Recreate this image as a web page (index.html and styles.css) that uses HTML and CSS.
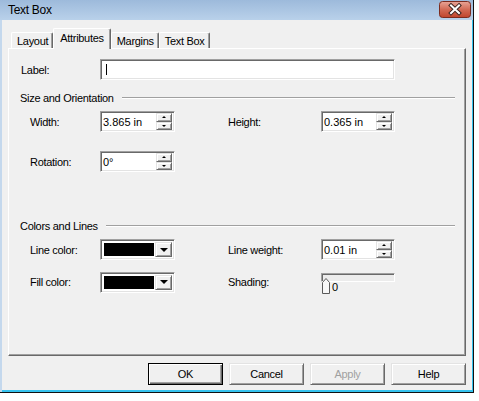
FILE: index.html
```html
<!DOCTYPE html>
<html lang="en">
  <head>
    <meta charset="UTF-8" />
    <title>Text Box</title>
    <link rel="stylesheet" href="styles.css">
  </head>
  <body>
    <div class="window">
      <div class="titlebar">
        <span class="title">Text Box</span>
        <span class="close">
          <svg width="32" height="17" viewBox="0 0 32 17">
            <defs>
              <linearGradient id="red" x1="0" y1="0" x2="0" y2="1">
                <stop offset="0" stop-color="#e8a597" />
                <stop offset="0.5" stop-color="#d26a55" />
                <stop offset="1" stop-color="#c0442c" />
              </linearGradient>
            </defs>
            <rect x="0.5" y="0.5" width="31" height="16" rx="3" fill="url(#red)" stroke="#7b2c20" />
            <path d="M12 4.5 L20 12 M20 4.5 L12 12" stroke="#3d2420" stroke-width="4" stroke-linecap="square" />
            <path d="M12 4.5 L20 12 M20 4.5 L12 12" stroke="#ffffff" stroke-width="2" stroke-linecap="square" />
          </svg>
        </span>
      </div>
      <div class="client">
        <div class="tabs">
          <div class="tab">Layout</div>
          <div class="tab active">Attributes</div>
          <div class="tab">Margins</div>
          <div class="tab">Text Box</div>
        </div>
        <div class="panel">
          <div class="row-label">
            <span>Label:</span>
            <div class="field wide"><span class="caret"></span></div>
          </div>

          <div class="group">Size and Orientation</div>
          <div class="row">
            <span>Width:</span>
            <div class="field spin">
              <span class="value">3.865 in</span>
              <span class="spin-btns"><span class="up"></span><span class="down"></span></span>
            </div>
            <span></span>
            <span>Height:</span>
            <div class="field spin">
              <span class="value">0.365 in</span>
              <span class="spin-btns"><span class="up"></span><span class="down"></span></span>
            </div>
          </div>
          <div class="row rot">
            <span>Rotation:</span>
            <div class="field spin">
              <span class="value">0°</span>
              <span class="spin-btns"><span class="up"></span><span class="down"></span></span>
            </div>
          </div>

          <div class="group colors">Colors and Lines</div>
          <div class="row">
            <span>Line color:</span>
            <div class="field combo">
              <span class="swatch"></span>
              <span class="drop"></span>
            </div>
            <span></span>
            <span>Line weight:</span>
            <div class="field spin">
              <span class="value">0.01 in</span>
              <span class="spin-btns"><span class="up"></span><span class="down"></span></span>
            </div>
          </div>
          <div class="row fill">
            <span>Fill color:</span>
            <div class="field combo">
              <span class="swatch"></span>
              <span class="drop"></span>
            </div>
            <span></span>
            <span>Shading:</span>
            <div class="slider">
              <div class="track"></div>
              <svg class="thumb" width="8" height="16" viewBox="0 0 8 16">
                <path d="M0.5 15.5 L0.5 4.5 L4 0.5 L7.5 4.5 L7.5 15.5 Z" fill="#f7f7f7" stroke="#5a5a5a" />
              </svg>
              <span class="slider-value">0</span>
            </div>
          </div>
        </div>
        <div class="buttons">
          <button class="btn default">OK</button>
          <button class="btn">Cancel</button>
          <button class="btn disabled">Apply</button>
          <button class="btn">Help</button>
        </div>
      </div>
    </div>
  </body>
</html>
```

FILE: styles.css
```css
body {
  margin: 0;
  background: #ffffff;
  font-family: "Liberation Sans", Arial, sans-serif;
  font-size: 11px;
  letter-spacing: -0.3px;
  color: #000;
}
.window {
  width: 474px;
  height: 393px;
  box-sizing: border-box;
  display: flex;
  flex-direction: column;
  background: #c4d8ed;
  border-right: 1px solid #111;
  border-bottom: 1px solid #111;
}
.titlebar {
  height: 20px;
  flex: none;
  display: flex;
  align-items: center;
  justify-content: space-between;
  background: linear-gradient(#9dbadb, #b9d1ea);
}
.title {
  padding-left: 8px;
  font-size: 12px;
  color: #000;
}
.close {
  display: flex;
  margin-right: 2px;
  align-self: flex-start;
  margin-top: 1px;
}
.client {
  flex: 1;
  margin-left: 2px;
  background: #f0f0f0;
  border-right: 1px solid #35c2ee;
  border-bottom: 2px solid #35c2ee;
  padding: 8px 0 0 6px;
}
.tabs {
  display: flex;
  align-items: flex-end;
  height: 20px;
  padding-left: 3px;
  position: relative;
  z-index: 1;
}
.tab {
  height: 16px;
  box-sizing: border-box;
  padding: 2px 4px 0 5px;
  border: 1px solid;
  border-bottom: none;
  border-color: #fff #696969 #696969 #fff;
  box-shadow: inset -1px 0 #a0a0a0;
  border-radius: 2px 2px 0 0;
  background: #f0f0f0;
  line-height: 13px;
}
.tab.active {
  height: 21px;
  margin-bottom: -1px;
  padding: 3px 6px 0 6px;
}
.panel {
  width: 458px;
  height: 308px;
  box-sizing: border-box;
  border: 1px solid;
  border-color: #fff #696969 #696969 #fff;
  box-shadow: inset -1px -1px #a0a0a0;
  padding: 10px 10px 0 12px;
}
.row-label {
  display: grid;
  grid-template-columns: 79px 295px;
  align-items: center;
  height: 21px;
}
.group {
  display: flex;
  align-items: center;
  height: 14px;
  margin-top: 11px;
  margin-left: -1px;
}
.group::after {
  content: "";
  flex: 1;
  margin-left: 8px;
  border-top: 1px solid #a0a0a0;
  border-bottom: 1px solid #fff;
}
.group.colors {
  margin-top: 47px;
}
.row {
  display: grid;
  grid-template-columns: 70px 75px 53px 93px 74px;
  align-items: center;
  height: 21px;
  padding-left: 9px;
  margin-top: 6px;
}
.row.rot {
  margin-top: 19px;
}
.row.fill {
  margin-top: 11px;
}
.field {
  height: 21px;
  box-sizing: border-box;
  background: #fff;
  border: 1px solid;
  border-color: #a0a0a0 #fff #fff #a0a0a0;
  box-shadow: inset 1px 1px #696969, inset -1px -1px #e3e3e3;
  display: flex;
  align-items: center;
}
.field.wide {
  padding-left: 5px;
}
.caret {
  width: 1px;
  height: 11px;
  background: #000;
}
.spin .value {
  flex: 1;
  padding-left: 2px;
  letter-spacing: 0;
}
.spin-btns {
  width: 16px;
  height: 17px;
  margin-right: 2px;
  display: flex;
  flex-direction: column;
}
.spin-btns span {
  flex: 1;
  box-sizing: border-box;
  background: #f0f0f0;
  border: 1px solid;
  border-color: #e3e3e3 #696969 #696969 #e3e3e3;
  box-shadow: inset 1px 1px #fff, inset -1px -1px #a0a0a0;
  display: flex;
  align-items: center;
  justify-content: center;
}
.spin-btns .up::before {
  content: "";
  border-left: 2px solid transparent;
  border-right: 2px solid transparent;
  border-bottom: 2px solid #000;
}
.spin-btns .down::before {
  content: "";
  border-left: 2px solid transparent;
  border-right: 2px solid transparent;
  border-top: 2px solid #000;
}
.combo {
  padding: 2px;
}
.swatch {
  flex: 1;
  align-self: stretch;
  margin: 1px;
  background: #000;
}
.drop {
  width: 17px;
  align-self: stretch;
  box-sizing: border-box;
  background: #f0f0f0;
  border: 1px solid;
  border-color: #e3e3e3 #696969 #696969 #e3e3e3;
  box-shadow: inset 1px 1px #fff, inset -1px -1px #a0a0a0;
  display: flex;
  align-items: center;
  justify-content: center;
}
.drop::before {
  content: "";
  border-left: 4px solid transparent;
  border-right: 4px solid transparent;
  border-top: 4px solid #000;
}
.slider {
  position: relative;
  align-self: start;
  height: 22px;
  padding-top: 2px;
  box-sizing: border-box;
}
.track {
  height: 9px;
  box-sizing: border-box;
  background: #ececec;
  border: 1px solid;
  border-color: #a0a0a0 #fff #fff #a0a0a0;
  box-shadow: inset 1px 1px #696969;
}
.thumb {
  position: absolute;
  left: 1px;
  top: 7px;
}
.slider-value {
  position: absolute;
  left: 11px;
  top: 10px;
  line-height: 12px;
}
.buttons {
  display: flex;
  justify-content: flex-end;
  gap: 6px;
  margin-top: 7px;
  width: 458px;
}
.btn {
  width: 75px;
  height: 22px;
  box-sizing: border-box;
  font-family: "Liberation Sans", Arial, sans-serif;
  font-size: 11px;
  letter-spacing: -0.3px;
  color: #000;
  background: #f0f0f0;
  border: 1px solid;
  border-color: #e3e3e3 #696969 #696969 #e3e3e3;
  box-shadow: inset 1px 1px #fff, inset -1px -1px #a0a0a0;
  padding: 0;
}
.btn.default {
  border-color: #000;
  box-shadow: inset 1px 1px #fff, inset -1px -1px #696969, inset -2px -2px #a0a0a0;
}
.btn.disabled {
  color: #a0a0a0;
}
```
